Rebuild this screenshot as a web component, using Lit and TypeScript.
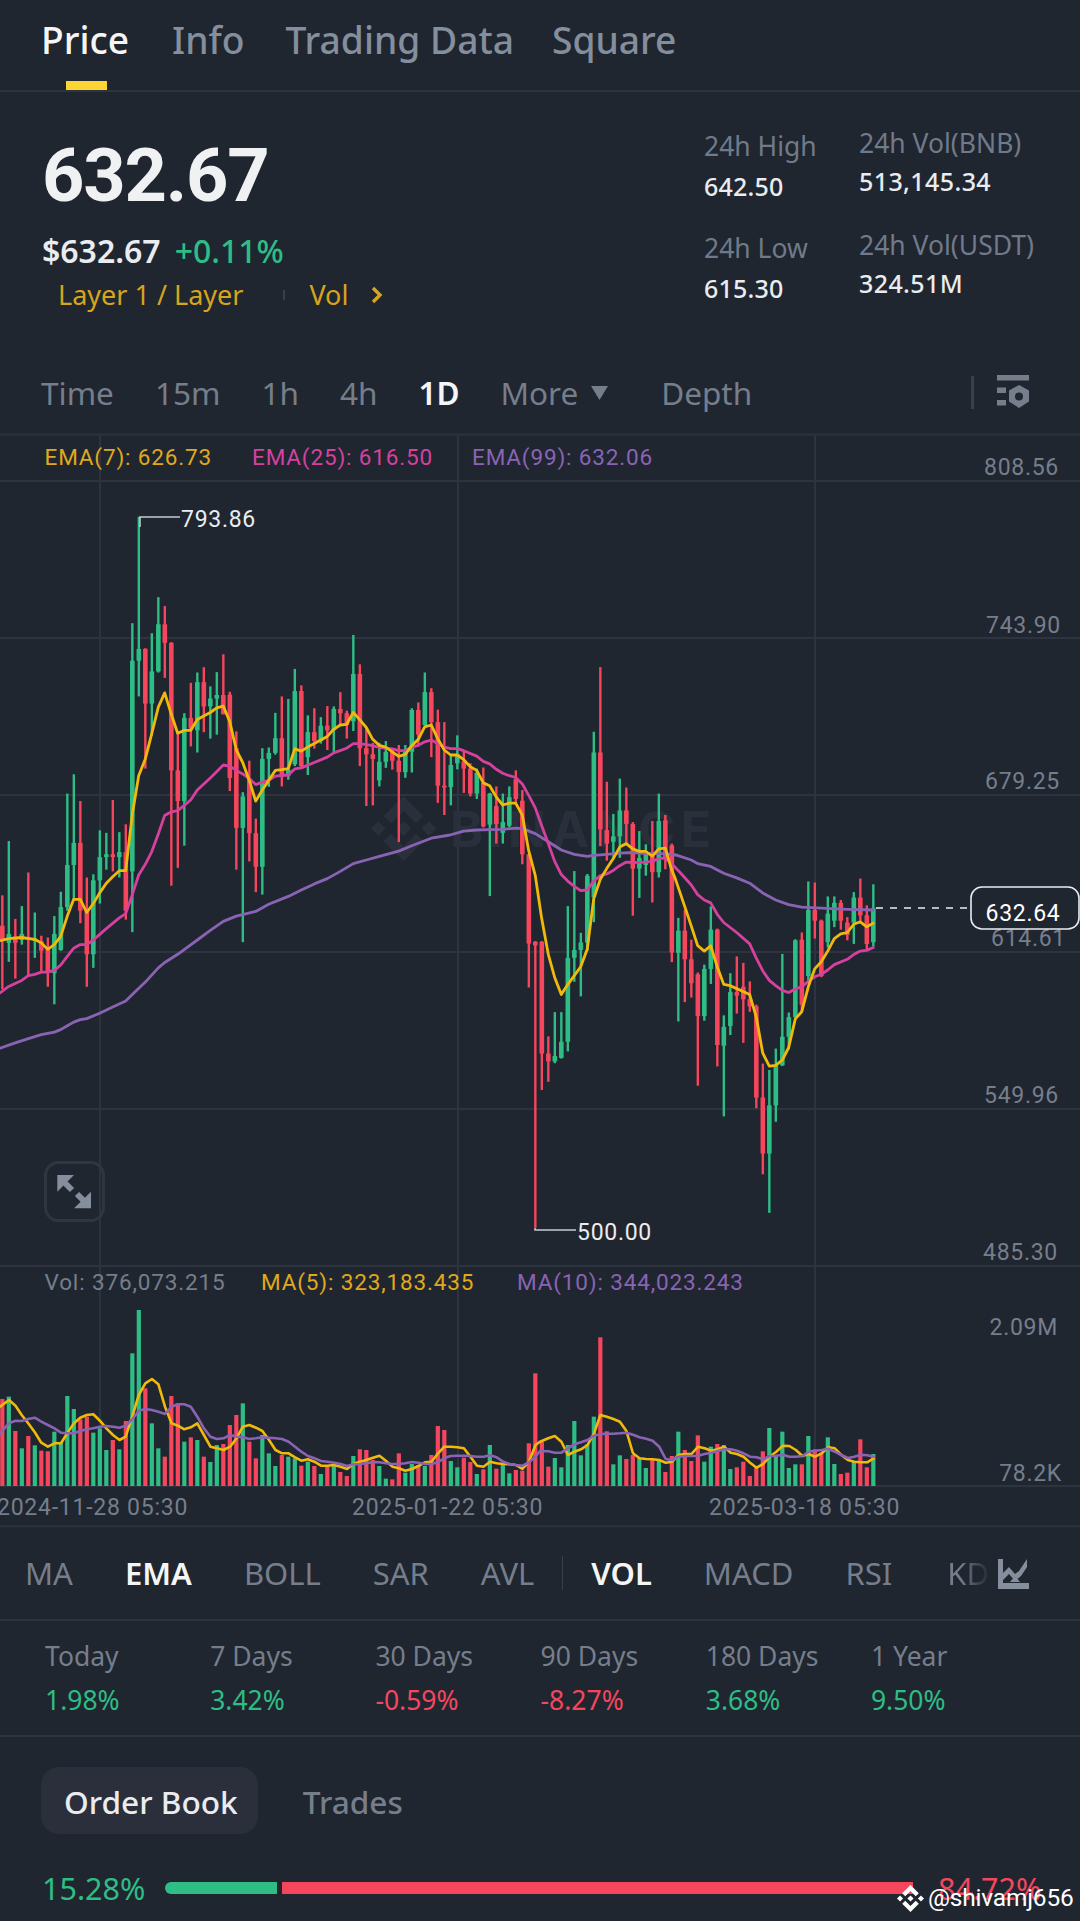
import { LitElement, html, css, svg } from "lit";
import { customElement } from "lit/decorators.js";

type Pt = [number, number];
const G = 1, R = 0;
// colour, high, body top, body bottom, low, in crop units
const SEC_A = [[R,1107,1192,1230,1370],[G,955,1215,1240,1293],[R,1173,1222,1240,1340],[G,1137,1215,1232,1245],[R,1043,1228,1232,1330],[G,1155,1228,1235,1282],[R,1220,1235,1262,1325],[R,1225,1255,1320,1363],[G,1165,1215,1325,1412],[G,1097,1140,1260,1262],[G,822,1022,1140,1150],[G,768,960,1022,1120],[R,843,960,1150,1185],[R,1057,1150,1272,1363],[G,1048,1065,1272,1310],[G,925,1000,1065,1130],[G,932,992,1000,1035],[R,840,992,1000,1040],[G,930,986,1000,1057],[R,908,986,1150,1175],[G,345,450,1040,1210],[G,47,417,450,550],[R,415,417,570,752],[G,373,480,570,660],[G,272,348,480,483],[R,297,348,400,498],[R,398,400,757,1080],[R,650,757,843,1030],[G,597,610,843,968],[R,512,610,640,690],[G,483,510,645,707],[R,468,510,578,650],[G,522,556,578,668],[G,482,546,556,657]];
const SEC_B = [[R,432,546,600,600],[R,537,545,778,815],[R,648,695,918,1035],[G,818,830,918,1238],[R,730,780,933,1012],[R,892,933,1027,1098],[G,695,725,1027,1105],[G,693,708,725,803],[G,596,667,708,713],[R,550,667,770,802],[G,557,755,772,783],[G,473,535,740,745],[R,519,535,745,748],[G,603,650,720,770],[R,583,650,675,696],[G,608,632,675,682],[R,577,632,645,700],[G,578,585,645,707],[R,538,585,597,630],[R,590,597,630,668],[G,378,487,620,647],[R,460,487,695,745],[R,637,695,712,857],[R,680,712,725,855],[G,680,733,785,802],[G,675,705,733,750],[R,700,705,730,755],[R,686,730,762,958],[G,686,705,762,778],[G,583,588,705,763],[R,567,588,657,690],[G,483,538,630,632],[R,527,538,622,720],[R,587,622,800,848],[R,622,800,805,882]];
const SEC_C = [[G,320,350,412,463],[G,267,320,345,362],[R,310,340,360,428],[R,345,360,430,438],[G,360,372,430,445],[R,357,400,522,525],[G,428,430,517,717],[R,410,465,515,570],[G,430,510,540,570],[G,410,440,520,525],[R,365,390,445,455],[R,420,450,600,628],[R,600,600,850,973],[R,843,845,855,1646],[R,843,845,1158,1260],[R,1110,1158,1180,1237],[G,1042,1165,1180,1185],[G,1042,1125,1170,1172],[G,745,890,1125,1152],[G,647,868,890,957],[G,820,847,868,998],[G,655,660,847,870],[G,257,315,720,790],[R,76,315,530,577],[R,397,532,570,618],[G,487,550,565,610],[G,388,477,550,610],[R,413,477,515,575],[R,510,515,640,772],[G,535,610,640,722],[G,572,600,630,660],[R,507,600,650,735],[G,430,507,650,665],[R,490,505,615,642],[R,570,575,875,902]];
const SEC_D = [[G,722,758,820,1012],[R,700,758,838,958],[R,783,838,905,945],[R,875,880,997,1192],[G,853,865,997,1010],[G,690,755,865,907],[R,752,755,1078,1138],[G,995,1027,1080,1278],[G,877,930,1025,1050],[R,830,930,940,990],[R,848,915,950,1072],[R,900,950,970,985],[R,965,970,1225,1255],[R,1130,1225,1382,1440],[G,1148,1247,1382,1548],[G,1088,1135,1247,1293],[G,823,1055,1135,1137],[G,987,1000,1055,1090],[G,782,785,1000,1002],[R,763,783,965,985],[G,620,700,885,905],[R,623,700,730,780],[R,727,730,885,888],[G,662,710,790,805],[G,662,680,730,748],[R,672,680,730,755],[R,720,735,770,785],[G,650,665,735,795],[R,612,665,715,738],[R,687,715,795,810],[G,628,695,790,802]];

const yA = (v: number) => 500 + v / 2.8;
const yC = (v: number) => 640 + v / 2.8;
const yD = (v: number) => 660 + v / 2.8;
const candles = [
  ...SEC_A.map((c) => [c[0], yA(c[1]), yA(c[2]), yA(c[3]), yA(c[4])]),
  ...SEC_B.map((c) => [c[0], yA(c[1]), yA(c[2]), yA(c[3]), yA(c[4])]),
  ...SEC_C.map((c) => [c[0], yC(c[1]), yC(c[2]), yC(c[3]), yC(c[4])]),
  ...SEC_D.map((c) => [c[0], yD(c[1]), yD(c[2]), yD(c[3]), yD(c[4])]),
];

const VOL = [[R,417],[G,410],[R,513],[G,565],[R,528],[G,556],[R,572],[R,574],[G,515],[G,547],[G,408],[G,447],[R,478],[R,470],[G,518],[G,505],[G,570],[R,540],[G,568],[R,483],[G,280],[G,150],[R,385],[G,490],[G,565],[R,590],[R,408],[R,430],[G,545],[R,532],[G,540],[R,590],[G,606],[G,555],[R,552],[R,495],[R,465],[G,430],[R,545],[R,595],[G,525],[G,580],[G,618],[R,585],[G,590],[G,595],[R,617],[G,605],[R,618],[G,642],[R,620],[G,618],[R,636],[R,648],[G,588],[R,568],[R,570],[R,600],[G,618],[G,656],[R,658],[R,580],[G,638],[G,612],[R,615],[G,618],[R,585],[R,498],[R,510],[G,603],[G,622],[R,593],[R,606],[G,642],[R,628],[G,555],[R,626],[G,612],[G,640],[R,630],[R,632],[R,550],[R,340],[R,545],[R,620],[G,594],[G,622],[G,555],[G,483],[G,586],[G,553],[G,470],[R,232],[R,514],[G,613],[G,586],[R,597],[R,585],[G,595],[G,624],[R,600],[G,600],[R,636],[R,588],[G,515],[R,570],[R,603],[R,526],[G,605],[G,560],[R,552],[G,555],[G,627],[R,622],[R,605],[R,648],[R,620],[R,574],[G,504],[G,590],[G,515],[G,624],[G,613],[R,613],[G,528],[R,568],[R,578],[G,532],[G,612],[R,642],[R,638],[G,605],[R,538],[R,622],[G,582]];

const map = (pts: number[][], xf: (v: number) => number, yf: (v: number) => number): Pt[] =>
  pts.map((p) => [xf(p[0]), yf(p[1])]);
const x1 = (v: number) => v / 3;
const x2 = (v: number) => 225 + v / 3;
const x3 = (v: number) => 450 + v / 3;
const x4 = (v: number) => 675 + v / 3;
const xv1 = (v: number) => v / 2.9037;
const xv2 = (v: number) => 540 + v / 2.9037;
const yv = (v: number) => 1260 + v / 3;

const yellow: Pt[] = [
  ...map([[0,1234],[26,1228],[65,1225],[104,1230],[124,1240],[143,1258],[163,1245],[182,1222],[202,1165],[221,1118],[241,1118],[260,1155],[280,1130],[299,1100],[319,1073],[338,1055],[358,1038],[377,1038],[397,880],[416,772],[436,725],[455,655],[475,580],[494,540],[514,600],[533,653],[553,645],[572,645],[592,615],[611,605],[631,595],[650,582],[670,577]], x1, yA),
  ...map([[14,620],[34,700],[53,735],[73,785],[92,843],[112,812],[131,785],[151,757],[170,755],[190,752],[209,697],[229,703],[248,692],[268,682],[287,672],[307,662],[326,642],[346,630],[365,628],[385,595],[404,615],[424,637],[443,670],[463,687],[482,692],[502,705],[521,718],[541,712],[560,688],[580,670],[599,635],[619,630],[638,668],[658,700]], x2, yA),
  ...map([[2,322],[22,322],[41,335],[61,355],[80,365],[100,400],[119,408],[139,440],[158,462],[178,457],[197,457],[217,490],[236,590],[256,660],[275,780],[295,880],[314,945],[334,993],[353,965],[373,940],[392,915],[412,865],[431,725],[451,670],[470,640],[490,612],[509,580],[529,570],[548,585],[568,592],[587,592],[607,605],[626,585],[646,583],[665,644]], x3, yC),
  ...map([[0,610],[29,690],[49,745],[68,800],[88,815],[107,800],[127,860],[146,908],[166,912],[185,920],[224,937],[244,1000],[263,1100],[283,1137],[302,1135],[322,1120],[341,1085],[361,1005],[380,985],[400,915],[419,865],[439,845],[458,815],[478,780],[497,767],[517,763],[536,740],[556,733],[575,747],[595,737]], x4, yD),
];
const pink: Pt[] = [
  ...map([[0,1380],[26,1362],[65,1345],[85,1332],[104,1328],[124,1322],[143,1322],[163,1317],[182,1302],[202,1278],[221,1255],[241,1245],[260,1245],[280,1232],[319,1200],[358,1170],[377,1158],[397,1105],[416,1050],[436,1020],[455,985],[475,935],[494,883],[514,873],[533,870],[553,855],[572,840],[592,812],[631,778],[670,742]], x1, yA),
  ...map([[14,745],[34,757],[53,767],[73,780],[92,797],[112,790],[131,785],[151,773],[190,770],[209,753],[229,750],[268,735],[307,720],[326,708],[365,695],[385,682],[404,682],[443,688],[463,693],[502,697],[521,702],[541,702],[560,692],[580,687],[599,677],[619,672],[638,682],[658,692]], x2, yA),
  ...map([[2,304],[22,304],[41,310],[80,325],[100,340],[119,347],[139,362],[158,373],[178,380],[197,385],[217,403],[236,435],[256,470],[275,520],[295,570],[314,620],[334,657],[353,675],[373,690],[392,702],[412,700],[431,675],[451,660],[470,655],[490,645],[509,632],[529,622],[548,623],[587,622],[607,620],[626,612],[646,610]], x3, yC),
  ...map([[0,580],[20,600],[49,630],[68,657],[88,672],[107,680],[127,712],[146,735],[185,763],[224,795],[244,835],[263,870],[283,897],[302,912],[322,925],[341,931],[361,921],[380,915],[400,900],[419,887],[439,880],[458,868],[478,853],[517,838],[536,825],[556,815],[575,813],[595,805]], x4, yD),
];
const purple: Pt[] = [
  ...map([[0,1535],[39,1522],[78,1510],[124,1497],[163,1490],[182,1483],[202,1472],[221,1462],[241,1455],[260,1452],[299,1437],[338,1420],[377,1403],[397,1385],[436,1350],[475,1310],[494,1295],[533,1272],[592,1232],[631,1205],[670,1180]], x1, yA),
  ...map([[34,1165],[92,1152],[131,1132],[190,1110],[229,1092],[268,1075],[307,1060],[346,1040],[385,1018],[424,1008],[463,998],[521,983],[560,968],[619,947],[675,938]], x2, yA),
  ...map([[41,535],[80,532],[119,531],[158,530],[197,527],[217,528],[256,542],[295,565],[334,588],[373,600],[412,606],[431,603],[470,600],[509,597],[548,595],[587,598],[646,598],[675,602]], x3, yC),
  ...map([[0,545],[49,560],[68,570],[107,578],[146,597],[185,610],[224,625],[263,652],[302,672],[341,685],[380,692],[439,695],[517,698],[595,700]], x4, yD),
];
const volYellow: Pt[] = [
  ...map([[0,440],[26,420],[45,437],[63,465],[82,490],[101,517],[120,548],[139,560],[158,550],[177,550],[196,518],[215,490],[233,473],[252,465],[271,463],[290,482],[309,505],[328,525],[347,540],[365,530],[384,470],[403,405],[422,370],[441,357],[460,373],[479,440],[498,490],[517,497],[535,508],[554,502],[573,490],[592,525],[611,560],[630,565],[649,570],[668,560],[687,535],[705,500],[724,495],[743,503],[762,513],[781,540],[800,570],[819,580],[838,580],[857,592],[875,602],[894,598],[913,605],[932,617],[951,617],[970,615],[989,620],[1008,627],[1026,612],[1045,605],[1064,600],[1083,593],[1102,587],[1121,603],[1140,620],[1158,625],[1177,632],[1196,627],[1215,618],[1234,607],[1253,605],[1272,580],[1290,560],[1309,560],[1328,562],[1347,565],[1366,590],[1385,617],[1404,620],[1423,605],[1442,610],[1461,612],[1480,613],[1498,615],[1517,627],[1536,605],[1555,555]], xv1, yv),
  ...map([[0,545],[24,535],[43,528],[62,545],[81,585],[100,575],[119,568],[138,555],[157,520],[175,465],[194,470],[213,477],[232,485],[251,513],[270,580],[289,595],[308,597],[327,598],[346,600],[365,608],[384,605],[402,585],[421,582],[440,582],[459,560],[478,565],[497,572],[516,568],[535,560],[554,578],[572,582],[591,590],[610,608],[629,623],[648,612],[667,590],[686,575],[705,557],[724,558],[743,570],[762,588],[780,582],[799,590],[818,580],[837,562],[856,565],[875,585],[894,600],[913,605],[931,607],[950,607],[969,595]], xv2, yv),
];
const volPurple: Pt[] = [
  ...map([[0,520],[26,490],[45,482],[63,483],[82,477],[101,473],[120,485],[139,495],[158,505],[177,518],[196,520],[215,520],[233,513],[252,508],[271,505],[290,500],[309,498],[328,500],[347,503],[365,497],[384,478],[403,452],[422,447],[441,450],[460,455],[479,462],[498,440],[517,433],[535,433],[554,440],[573,470],[592,505],[611,530],[630,537],[649,535],[668,525],[687,530],[705,532],[724,537],[743,535],[762,532],[781,533],[800,535],[819,537],[838,545],[857,560],[875,575],[894,588],[913,595],[932,603],[951,605],[970,608],[989,612],[1008,618],[1026,613],[1045,612],[1064,610],[1083,606],[1102,607],[1121,610],[1140,612],[1158,612],[1177,610],[1196,606],[1215,608],[1234,612],[1253,612],[1272,607],[1290,594],[1309,588],[1328,587],[1347,587],[1366,588],[1385,590],[1404,590],[1423,586],[1442,592],[1461,605],[1480,612],[1498,615],[1517,617],[1536,607],[1555,590]], xv1, yv),
  ...map([[0,573],[24,574],[43,578],[62,578],[81,565],[100,553],[119,547],[138,540],[157,527],[175,522],[194,521],[213,521],[232,520],[251,518],[270,524],[289,532],[308,536],[327,542],[346,560],[365,597],[384,600],[402,590],[421,588],[440,588],[459,587],[478,582],[497,578],[516,573],[535,568],[554,568],[572,572],[591,580],[610,590],[629,592],[648,598],[667,588],[686,587],[705,584],[724,590],[743,590],[762,588],[780,575],[799,572],[818,570],[837,566],[856,575],[875,585],[894,594],[913,590],[931,584],[950,586],[969,590]], xv2, yv),
];
const poly = (p: Pt[]) => p.map((q) => `${q[0].toFixed(1)},${q[1].toFixed(1)}`).join(" ");
const cx = (i: number) => 2.33 + 6.5 * i;

const LOGO = svg`
  <polygon points="38.73,53.2 63.3,28.63 87.89,53.22 102.19,38.92 63.3,0 24.43,38.9"/>
  <polygon points="0,63.31 14.3,49.01 28.6,63.31 14.3,77.61"/>
  <polygon points="38.73,73.41 63.3,97.98 87.89,73.39 102.2,87.69 63.31,126.61 24.43,87.71"/>
  <polygon points="98,63.31 112.3,49.01 126.61,63.31 112.3,77.61"/>
  <polygon points="63.3,48.8 77.8,63.3 63.3,77.8 48.8,63.3"/>`;

@customElement("kline-chart")
export class KlineChart extends LitElement {
  static styles = css`
    :host { display: block; height: 1093px; margin-top: -2px; }
    svg { display: block; }
    .grid { stroke: #2d3440; stroke-width: 2; }
    .wm { fill: #2a303b; }
    .wmt { fill: #2a303b; font: 700 50px "Inter", sans-serif; letter-spacing: 5.5px; }
    .up { fill: #2ebd85; }
    .down { fill: #f6465d; }
    .line { fill: none; stroke-width: 2.8; stroke-linejoin: round; stroke-linecap: round; }
    .thin { stroke-width: 2.6; }
    .y { stroke: #f0b90b; }
    .p { stroke: #d6419f; }
    .v { stroke: #8a63b5; }
    text { font-family: "Roboto", sans-serif; }
    .ax { fill: #767e8c; font-size: 23px; letter-spacing: 0.7px; text-anchor: end; }
    .date { fill: #767e8c; font-size: 23px; letter-spacing: 0.75px; }
    .lg { font-size: 22.5px; letter-spacing: 0.85px; }
    .ly { fill: #e0a91c; }
    .lp { fill: #d6419f; }
    .lv { fill: #8a63b5; }
    .lg0 { fill: #767e8c; }
    .mark { fill: #eaecef; font-size: 23px; letter-spacing: 0.7px; }
    .ml { stroke: #c8ccd2; stroke-width: 1.5; fill: none; }
    .dash { stroke: #eaecef; stroke-width: 1.5; stroke-dasharray: 7 7; }
    .box { fill: #1f2630; stroke: #eaecef; stroke-width: 1.6; }
    .now { fill: #fff; font-size: 23px; letter-spacing: 0.7px; text-anchor: middle; }
    .btn { fill: none; stroke: #2f3642; stroke-width: 3; }
    .arrow { fill: #848e9c; }
    .as { stroke: #848e9c; stroke-width: 6; }
  `;
  render() {
    const hlines = [481, 638, 795, 952, 1109, 1266];
    const vlines = [100, 458, 815];
    return html`<svg width="1080" height="1093" viewBox="0 434 1080 1093">
      ${hlines.map((y) => svg`<line class="grid" x1="0" x2="1080" y1=${y} y2=${y}></line>`)}
      <line class="grid" x1="0" x2="1080" y1="1486" y2="1486"></line>
      <line class="grid" x1="0" x2="1080" y1="1526.500" y2="1526.500"></line>
      ${vlines.map((x) => svg`<line class="grid" x1=${x} x2=${x} y1="434" y2="1486"></line>`)}
      <g class="wm" transform="translate(371 796) scale(0.515)">${LOGO}</g>
      <text class="wmt" x="450" y="847">BINANCE</text>
      ${candles.map((c, i) => {
        const x = cx(i);
        const k = c[0] === G ? "up" : "down";
        return svg`<rect class=${k} x=${x - 1.2} y=${c[1]} width="2.4" height=${c[4] - c[1]}></rect>
          <rect class=${k} x=${x - 2.3} y=${c[2]} width="4.6" height=${Math.max(c[3] - c[2], 1.5)}></rect>`;
      })}
      <polyline class="line v" points=${poly(purple)}></polyline>
      <polyline class="line p" points=${poly(pink)}></polyline>
      <polyline class="line y" points=${poly(yellow)}></polyline>
      ${VOL.map((b, i) => svg`<rect class=${b[0] === G ? "up" : "down"} x=${cx(i) - 2.1} y=${yv(b[1])} width="4.2" height=${1486 - yv(b[1])}></rect>`)}
      <polyline class="line thin y" points=${poly(volYellow)}></polyline>
      <polyline class="line thin v" points=${poly(volPurple)}></polyline>

      <text class="lg ly" x="44.500" y="465">EMA(7): 626.73</text>
      <text class="lg lp" x="252" y="465">EMA(25): 616.50</text>
      <text class="lg lv" x="472" y="465">EMA(99): 632.06</text>
      <text class="lg lg0" x="44.500" y="1290">Vol: 376,073.215</text>
      <text class="lg ly" x="261" y="1290">MA(5): 323,183.435</text>
      <text class="lg lv" x="517" y="1290">MA(10): 344,023.243</text>

      <text class="ax" x="1059" y="475">808.56</text>
      <text class="ax" x="1061" y="633">743.90</text>
      <text class="ax" x="1060" y="789">679.25</text>
      <text class="ax" x="1059" y="1103">549.96</text>
      <text class="ax" x="1058" y="1260">485.30</text>
      <text class="ax" x="1058" y="1335">2.09M</text>
      <text class="ax" x="1062" y="1481">78.2K</text>
      <text class="ax" x="1066" y="946">614.61</text>

      <text class="date" x="-3" y="1515">2024-11-28 05:30</text>
      <text class="date" x="352" y="1515">2025-01-22 05:30</text>
      <text class="date" x="709" y="1515">2025-03-18 05:30</text>

      <polyline class="ml" points="140,527 140,517 180,517"></polyline>
      <text class="mark" x="181" y="527">793.86</text>
      <polyline class="ml" points="535,1228 535,1230 576,1230"></polyline>
      <text class="mark" x="577" y="1240">500.00</text>

      <line class="dash" x1="876" x2="971" y1="908" y2="908"></line>
      <rect class="box" x="971" y="887" width="108" height="42" rx="11"></rect>
      <text class="now" x="1023" y="921">632.64</text>

      <rect class="btn" x="45.5" y="1162.5" width="58" height="58" rx="13"></rect>
      <polygon class="arrow" points="57.3,1175 74,1175 57.3,1191.7"></polygon>
      <polygon class="arrow" points="91,1208.3 74,1208.3 91,1191.7"></polygon>
      <line class="as" x1="62" y1="1180" x2="72" y2="1190"></line>
      <line class="as" x1="86" y1="1203" x2="77" y2="1194"></line>
    </svg>`;
  }
}

@customElement("app-root")
export class AppRoot extends LitElement {
  static styles = css`
    :host {
      display: block; position: relative; width: 1080px; height: 1921px; overflow: hidden;
      background: #1f2630; color: #eaecef;
      font-family: "Noto Sans", sans-serif;
    }
    .tabs {
      display: flex; gap: 41px; height: 90px; padding: 0 0 0 41px;
      border-bottom: 2px solid #2d3440; font-size: 37.2px; font-weight: 500; line-height: 80px; color: #848e9c; position: relative;
    }
    .tabs .on { color: #f5f5f5; margin-right: 2px; }
    .tabs .last { margin-left: -3px; }
    .ink { position: absolute; left: 66px; bottom: 0; width: 41px; height: 9px; background: #fcd535; }
    .hero { display: grid; grid-template-columns: 662px 155px 1fr; height: 268px; padding-left: 42px; }
    .big { font: 700 74px/80px "Roboto", sans-serif; margin-top: 44px; color: #f0f1f3; letter-spacing: -1.2px; }
    .sub { display: flex; gap: 14px; margin-top: 15px; font-size: 32px; line-height: 40px; font-weight: 600; }
    .sub .green { font-weight: 500; }
    .green { color: #2ebd85; }
    .red { color: #f6465d; }
    .tags { display: flex; align-items: center; margin-top: 4px; padding-left: 16px; font-size: 27px; line-height: 40px; color: #d8a41c; }
    .tags i { width: 2px; height: 10px; background: #39404c; margin: 0 24px 0 40px; }
    .tags svg { margin-left: 23px; }
    .stat { display: flex; flex-direction: column; }
    .c1 { padding-top: 35px; }
    .c2 { padding-top: 32px; }
    .stat span { line-height: 38px; font-size: 26.5px; color: #707a8a; white-space: nowrap; }
    .stat b { line-height: 38px; font-size: 25px; letter-spacing: 0.2px; font-weight: 500; color: #eaecef; margin: 2px 0 24px; white-space: nowrap; }
    .c2 b { margin-top: 0; margin-bottom: 26px; letter-spacing: 0.4px; }
    .times {
      display: flex; align-items: center; gap: 41px; height: 65px; padding: 0 0 8px 41px; font-size: 31.5px; color: #767e8c;
      border-bottom: 3px solid #282f3a; position: relative;
    }
    .times .on { color: #f5f5f5; font-weight: 600; }
    .more { display: flex; align-items: center; gap: 13px; margin-right: 12px; }
    .set { position: absolute; left: 971px; top: 15px; display: flex; }
    .inds {
      display: flex; align-items: center; gap: 52px; height: 92px; padding-left: 25px; font-size: 31px; color: #767e8c;
      border-bottom: 2px solid #2d3440; position: relative; overflow: hidden; white-space: nowrap;
    }
    .inds .on { color: #f5f5f5; font-weight: 600; }
    .inds .rule { width: 1px; height: 34px; background: #39404c; margin: 0 -24px; }
    .fade { margin-left: 3px; background: linear-gradient(90deg, #767e8c 30%, #2a303b 95%); -webkit-background-clip: text; background-clip: text; color: transparent; }
    .ico { position: absolute; left: 998px; top: 32px; display: flex; }
    .stats { display: grid; grid-template-columns: repeat(6, 165.2px); height: 114px; padding-left: 45px; border-bottom: 2px solid #2d3440; align-content: start; }
    .stats div { display: flex; flex-direction: column; padding-top: 15px; }
    .stats span { font-size: 26.5px; line-height: 40px; color: #767e8c; }
    .stats b { font-size: 26.5px; line-height: 40px; font-weight: 400; margin-top: 4px; }
    .book { display: flex; align-items: center; gap: 45px; margin: 30px 0 0 41px; height: 67px; font-size: 31.6px; font-weight: 500; color: #767e8c; }
    .book span { padding-top: 3px; line-height: 64px; }
    .book .pill { background: #2a2f3b; border-radius: 18px; padding: 3px 20px 0 23px; color: #eaecef; }
    .ratio { display: flex; align-items: center; height: 40px; margin-top: 34px; padding-left: 42px; font-size: 30.5px; }
    .ratio .green { width: 123px; }
    .bar { width: 112px; height: 12px; background: #2ebd85; border-radius: 6px 0 0 6px; }
    .bar2 { width: 631px; height: 12px; background: #f6465d; margin: 0 25px 0 5px; }
    .stamp { position: absolute; left: 897px; top: 1884px; display: flex; align-items: center; gap: 4px; color: #fff; font: 400 24.5px/28px "Roboto", sans-serif; letter-spacing: -0.2px; }
    .stamp svg { fill: #fff; }
  `;
  render() {
    const periods: [string, string, string][] = [
      ["Today", "1.98%", "green"], ["7 Days", "3.42%", "green"], ["30 Days", "-0.59%", "red"],
      ["90 Days", "-8.27%", "red"], ["180 Days", "3.68%", "green"], ["1 Year", "9.50%", "green"],
    ];
    return html`
      <div class="tabs">
        <span class="on">Price</span><span>Info</span><span>Trading Data</span><span class="last">Square</span>
        <div class="ink"></div>
      </div>
      <div class="hero">
        <div>
          <div class="big">632.67</div>
          <div class="sub"><span>$632.67</span><span class="green">+0.11%</span></div>
          <div class="tags">
            <span>Layer 1 / Layer</span><i></i><span>Vol</span>
            <svg width="12" height="18" viewBox="0 0 12 18"><path d="M2 2l7 7-7 7" fill="none" stroke="#d8a41c" stroke-width="3.4"/></svg>
          </div>
        </div>
        <div class="stat c1">
          <span>24h High</span><b>642.50</b>
          <span>24h Low</span><b>615.30</b>
        </div>
        <div class="stat c2">
          <span>24h Vol(BNB)</span><b>513,145.34</b>
          <span>24h Vol(USDT)</span><b>324.51M</b>
        </div>
      </div>
      <div class="times">
        <span>Time</span><span>15m</span><span>1h</span><span>4h</span><span class="on">1D</span>
        <span class="more">More
          <svg width="17" height="14" viewBox="0 0 17 14"><path d="M0 0h17l-8.5 14z" fill="#767e8c"/></svg>
        </span>
        <span>Depth</span>
        <div class="set">
          <svg width="60" height="36" viewBox="0 0 60 36">
            <rect x="0" y="1" width="3" height="33" fill="#39404c"/>
            <rect x="26" y="0" width="32" height="5.5" fill="#767e8c"/>
            <rect x="26" y="12.5" width="9" height="5.5" fill="#767e8c"/>
            <rect x="26" y="25" width="9" height="5.5" fill="#767e8c"/>
            <path fill-rule="evenodd" d="M48 10l10 5.500v11L48 33l-10-6.500v-11zM48 17.500a4 4 0 1 0 0 8 4 4 0 0 0 0-8z" fill="#767e8c"/>
          </svg>
        </div>
      </div>
      <kline-chart></kline-chart>
      <div class="inds">
        <span>MA</span><span class="on">EMA</span><span>BOLL</span><span>SAR</span><span>AVL</span>
        <i class="rule"></i>
        <span class="on">VOL</span><span>MACD</span><span>RSI</span><span class="fade">KD</span>
        <div class="ico">
          <svg width="31" height="30" viewBox="0 0 31 30" fill="#848e9c">
            <path d="M0 0h5v24h26v6H0z"/>
            <path d="M5 14l6-6 6 7 4-3 8-12v8l-6 9-6 5-6-7-6 6z"/>
            <path d="M17 17l5 6H12z"/>
          </svg>
        </div>
      </div>
      <div class="stats">
        ${periods.map((p) => html`<div><span>${p[0]}</span><b class=${p[2]}>${p[1]}</b></div>`)}
      </div>
      <div class="book"><span class="pill">Order Book</span><span>Trades</span></div>
      <div class="ratio">
        <span class="green">15.28%</span><div class="bar"></div><div class="bar2"></div><span class="red">84.72%</span>
      </div>
      <div class="stamp">
        <svg width="27" height="27" viewBox="0 0 126.61 126.61">${LOGO}</svg>
        <span>@shivamj656</span>
      </div>
    `;
  }
}
